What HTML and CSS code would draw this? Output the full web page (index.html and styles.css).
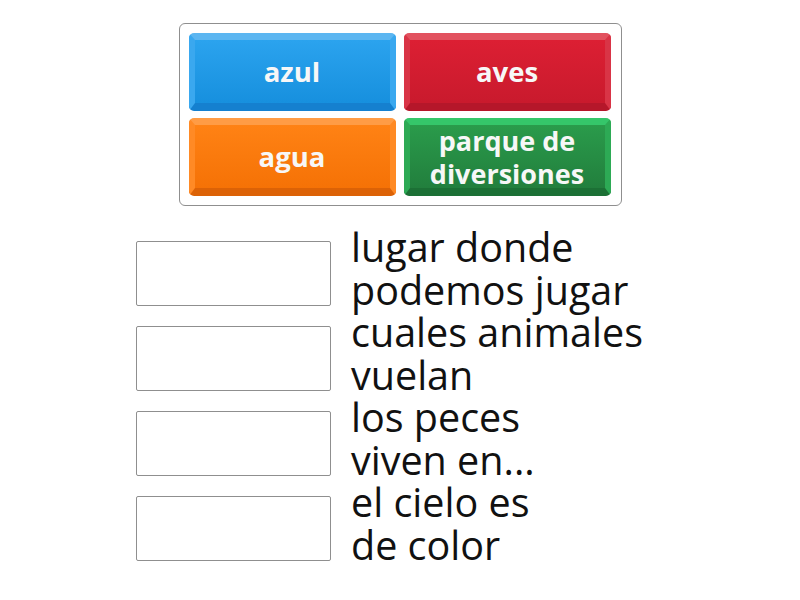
FILE: index.html
```html
<!DOCTYPE html>
<html lang="es">
<head>
    <meta charset="UTF-8">
    <meta name="viewport" content="width=device-width, initial-scale=1.0">
    <title>Relacionar</title>
    <link rel="stylesheet" href="styles.css">
</head>
<body>
    <div class="bank">
        <div class="tile blue">azul</div>
        <div class="tile red">aves</div>
        <div class="tile orange">agua</div>
        <div class="tile green">parque de diversiones</div>
    </div>

    <div class="answers">
        <div class="row">
            <div class="slot"></div>
            <p class="clue">lugar donde<br>podemos jugar</p>
        </div>
        <div class="row">
            <div class="slot"></div>
            <p class="clue">cuales animales<br>vuelan</p>
        </div>
        <div class="row">
            <div class="slot"></div>
            <p class="clue">los peces<br>viven en...</p>
        </div>
        <div class="row">
            <div class="slot"></div>
            <p class="clue">el cielo es<br>de color</p>
        </div>
    </div>
</body>
</html>
```

FILE: styles.css
```css
* {
    margin: 0;
    box-sizing: border-box;
}
body {
    font-family: "Open Sans", "Noto Sans", sans-serif;
    background: #fff;
    padding-top: 23px;
}
.bank {
    width: 443px;
    margin: 0 auto;
    padding: 9px;
    border: 1px solid #8f8f8f;
    border-radius: 6px;
    display: grid;
    grid-template-columns: 207px 207px;
    grid-auto-rows: 78px;
    column-gap: 8px;
    row-gap: 7px;
}
.tile {
    display: flex;
    align-items: center;
    justify-content: center;
    text-align: center;
    color: #f7f7f7;
    font-weight: 700;
    font-size: 27.5px;
    line-height: 33px;
    padding: 0 6px;
    border-style: solid;
    border-width: 7px 6px 8px 6px;
    border-radius: 5px;
}
.blue {
    background: linear-gradient(#2ba3ee, #1790de);
    border-color: #5cb6f1 #3aa8ef #1580cf #3aa8ef;
}
.red {
    background: linear-gradient(#dc1f33, #c91a2d);
    border-color: #e2525f #d93446 #b5172a #d93446;
}
.orange {
    background: linear-gradient(#ff8214, #f57206);
    border-color: #ff9c45 #ff8a25 #dc6206 #ff8a25;
}
.green {
    font-size: 27px;
    background: linear-gradient(#2a9b4b, #227f3d);
    border-color: #35c66a #2daa55 #1c7035 #2daa55;
}
.answers {
    margin-top: 23px;
    padding-left: 136px;
}
.row {
    display: flex;
    gap: 20px;
    height: 85px;
}
.slot {
    width: 195px;
    height: 65px;
    margin-top: 12px;
    background: #fff;
    border: 1px solid #8f8f8f;
    border-radius: 2px;
}
.clue {
    margin-top: -3px;
    font-size: 39.5px;
    line-height: 42.5px;
    color: #111;
    white-space: nowrap;
}
```
